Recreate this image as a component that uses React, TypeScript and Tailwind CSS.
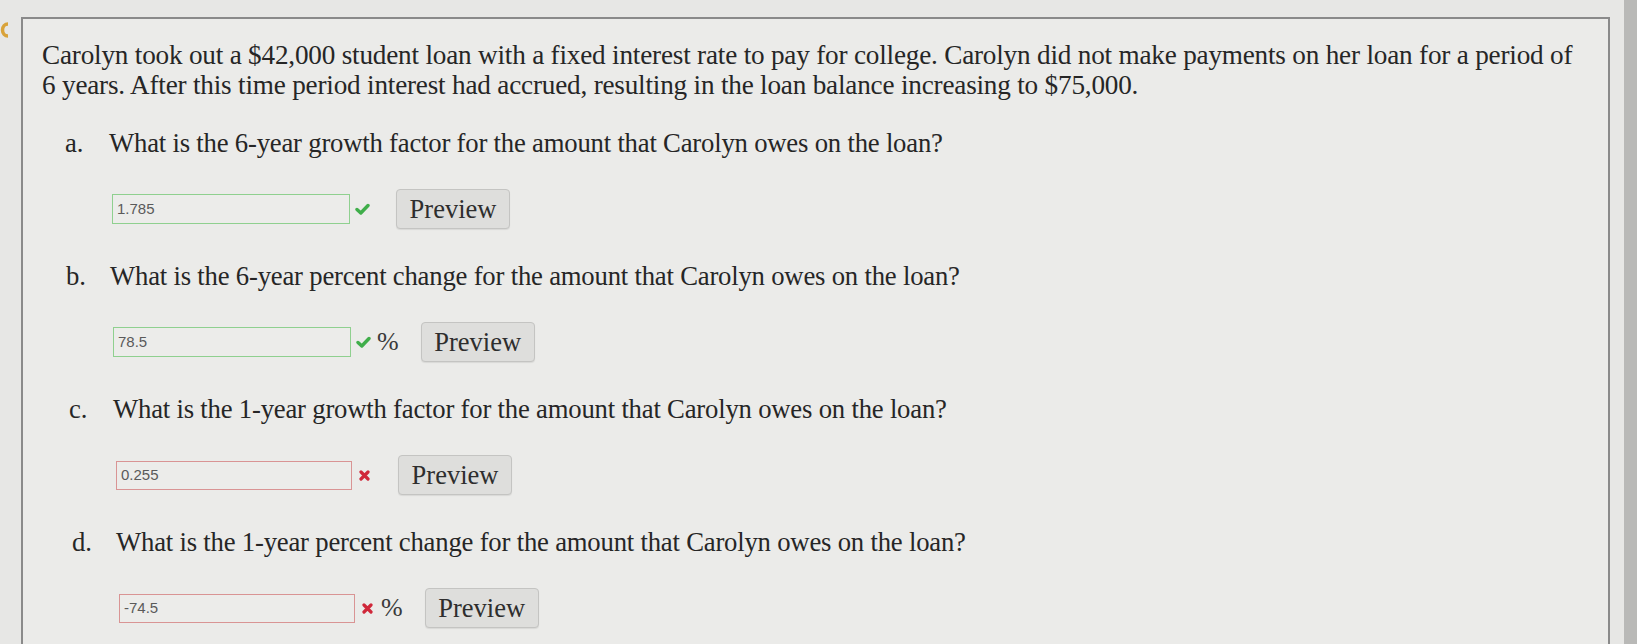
import { Fragment } from "react";

type Part = {
	label: string;
	question: string;
	answer: string;
	correct: boolean;
	percent: boolean;
	shift: string;
};

const PARTS: Part[] = [
	{
		label: "a.",
		question: "What is the 6-year growth factor for the amount that Carolyn owes on the loan?",
		answer: "1.785",
		correct: true,
		percent: false,
		shift: "pl-[0px]",
	},
	{
		label: "b.",
		question: "What is the 6-year percent change for the amount that Carolyn owes on the loan?",
		answer: "78.5",
		correct: true,
		percent: true,
		shift: "pl-[1px]",
	},
	{
		label: "c.",
		question: "What is the 1-year growth factor for the amount that Carolyn owes on the loan?",
		answer: "0.255",
		correct: false,
		percent: false,
		shift: "pl-[4px]",
	},
	{
		label: "d.",
		question: "What is the 1-year percent change for the amount that Carolyn owes on the loan?",
		answer: "-74.5",
		correct: false,
		percent: true,
		shift: "pl-[7px]",
	},
];

function CheckMark() {
	return (
		<svg width="15" height="12" viewBox="0 0 15 12" aria-hidden>
			<path d="M2 6.5 L5.8 10 L13 2.5" fill="none" stroke="#3fae4a" strokeWidth="3.4" strokeLinecap="round" strokeLinejoin="round" />
		</svg>
	);
}

function CrossMark() {
	return (
		<svg width="11" height="11" viewBox="0 0 11 11" aria-hidden>
			<path d="M2 2 L9 9 M9 2 L2 9" fill="none" stroke="#d0283a" strokeWidth="3.2" strokeLinecap="round" />
		</svg>
	);
}

function AnswerRow({ part }: { part: Part }) {
	return (
		<div className="flex h-[40px] items-center">
			<div
				className={
					part.correct
						? "flex h-[30px] w-[238px] items-center border border-[#8fd08f] bg-[#ececea] pl-[4px] font-['Liberation_Sans',Arial,sans-serif] text-[15px] text-[#5a5a5a]"
						: "flex h-[29px] w-[236px] items-center border border-[#d99494] bg-[#ececea] pl-[4px] font-['Liberation_Sans',Arial,sans-serif] text-[15px] text-[#5a5a5a]"
				}
			>
				{part.answer}
			</div>
			<div className="ml-[4px] flex w-[16px] items-center justify-center">
				{part.correct ? <CheckMark /> : <CrossMark />}
			</div>
			{part.percent ? <span className="ml-[6px] text-[26px] leading-none text-[#3a3a3a]">%</span> : null}
			<button
				className={
					(part.percent ? "ml-[22px] " : "ml-[26px] ") +
					"h-[40px] w-[114px] rounded-[4px] border border-[#c4c4c2] bg-[#dededc] text-[26.5px] leading-none text-[#2e2e2e] shadow-[0_1px_1px_rgba(0,0,0,0.08)]"
				}
			>
				Preview
			</button>
		</div>
	);
}

export default function App() {
	return (
		<main className="relative flex h-[644px] w-[1637px] overflow-hidden bg-[#e7e7e5] font-['Liberation_Serif','Times_New_Roman',serif] text-[#262626]">
			<svg className="absolute left-0 top-[20px]" width="12" height="20" viewBox="0 0 12 20" aria-hidden>
				<path d="M8 4 A5.5 6 0 1 0 8 16" fill="none" stroke="#d9a33a" strokeWidth="3.5" />
			</svg>

			<div className="flex-1 pl-[21px] pr-[14px] pt-[17px]">
				<section className="h-[640px] border-l-[2px] border-r-[2px] border-t-[2px] border-[#8a8a8a] bg-[#ebebe9] pl-[19px] pr-[16px] pt-[22px]">
					<p className="text-[27.2px] leading-[29.5px] tracking-[-0.2px]">
						Carolyn took out a $42,000 student loan with a fixed interest rate to pay for college. Carolyn did not make payments on her loan for a period of 6 years. After this time period interest had accrued, resulting in the loan balance increasing to $75,000.
					</p>

					<ol className="mt-[29px]">
						{PARTS.map((part) => (
							<li key={part.label} className={"mb-[33px] flex " + part.shift}>
								<span className="w-[67px] pl-[23px] text-[26.7px] leading-[29px]">{part.label}</span>
								<div>
									<p className="text-[26.7px] leading-[29px] tracking-[-0.2px]">{part.question}</p>
									<div className="mt-[31px] pl-[3px]">
										<AnswerRow part={part} />
									</div>
								</div>
							</li>
						))}
					</ol>
				</section>
			</div>

			<div className="w-[13px] bg-[#b9b9b7]" />
			<Fragment />
		</main>
	);
}
